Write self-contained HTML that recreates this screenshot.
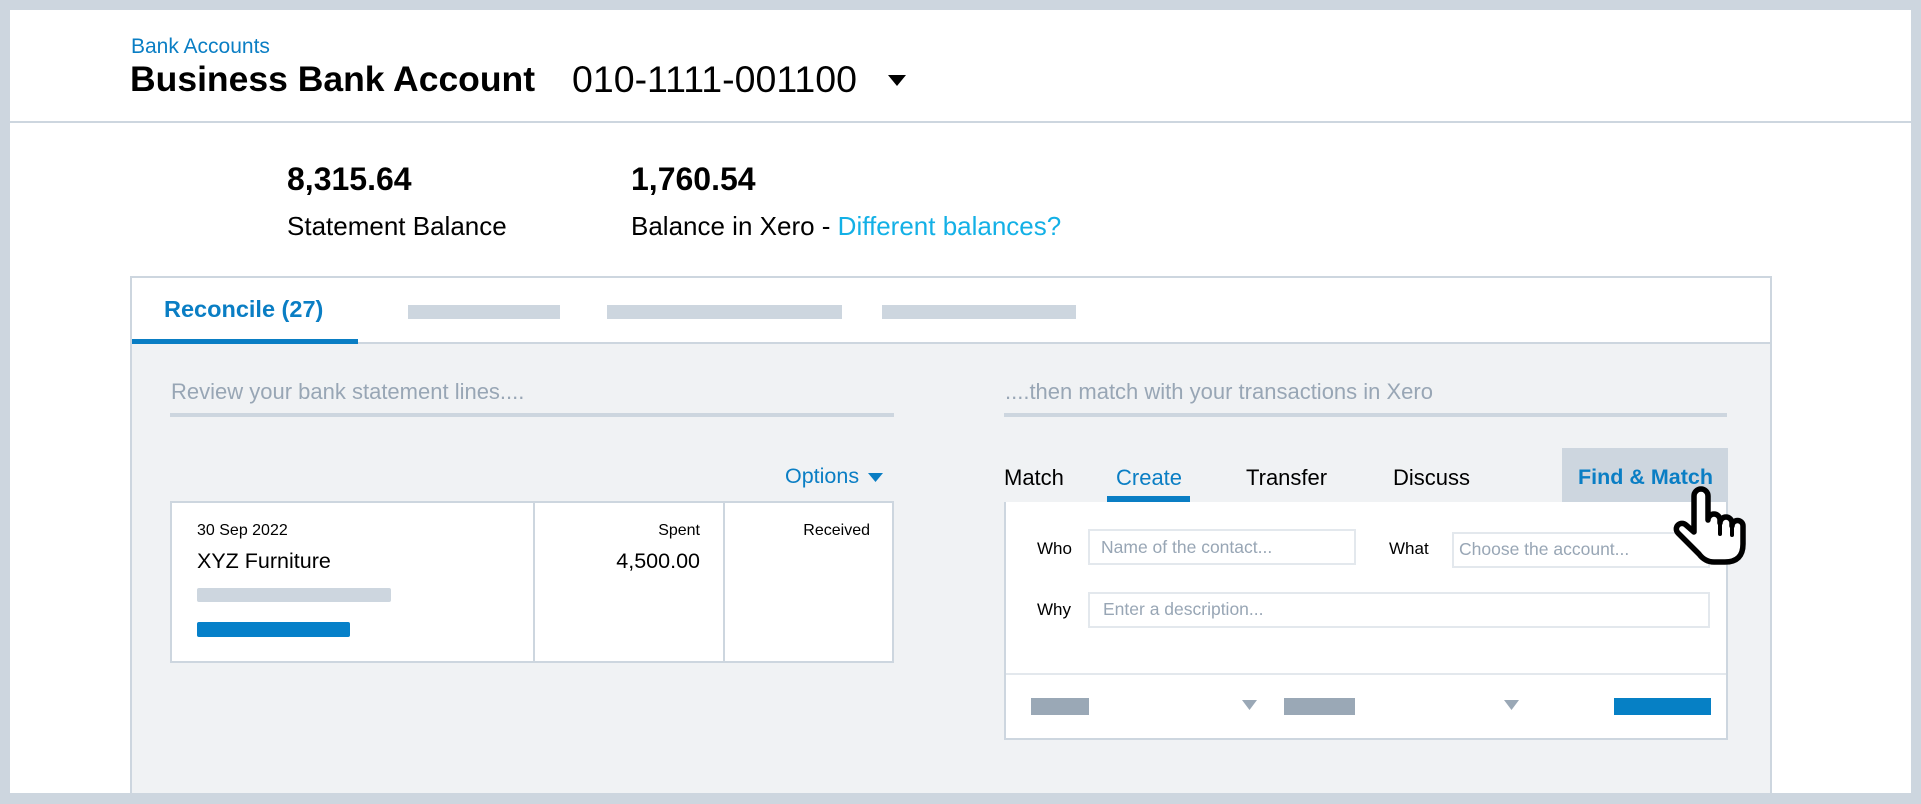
<!DOCTYPE html>
<html><head><meta charset="utf-8"><style>
*{margin:0;padding:0;box-sizing:border-box}
body{width:1921px;height:804px;background:#cdd6df;position:relative;overflow:hidden;font-family:"Liberation Sans",Arial,sans-serif;color:#000}
.a{position:absolute}
.t{position:absolute;white-space:nowrap;line-height:1}
</style></head><body>
<div class="a" style="left:10px;top:10px;width:1901px;height:783px;background:#fff"></div>
<div class="a" style="left:10px;top:121px;width:1901px;height:2px;background:#cdd6df"></div>
<div class="t" style="left:131px;top:36px;font-size:21px;color:#0a7ec4">Bank Accounts</div>
<div class="t" style="left:130px;top:62px;font-size:35.5px;font-weight:bold">Business Bank Account</div>
<div class="t" style="left:572px;top:61px;font-size:37.5px">010-1111-001100</div>
<svg class="a" style="left:888px;top:75px" width="18" height="12"><path d="M0,0H18L9,11Z" fill="#000"/></svg>

<div class="t" style="left:287px;top:163px;font-size:32px;font-weight:bold">8,315.64</div>
<div class="t" style="left:287px;top:213px;font-size:26px">Statement Balance</div>
<div class="t" style="left:631px;top:163px;font-size:32px;font-weight:bold">1,760.54</div>
<div class="t" style="left:631px;top:213px;font-size:26px">Balance in Xero - <span style="color:#13b0e6">Different balances?</span></div>

<div class="a" style="left:130px;top:276px;width:1642px;height:517px;background:#f0f2f4;border:2px solid #cdd6df;border-bottom:none"></div>
<div class="a" style="left:132px;top:278px;width:1638px;height:66px;background:#fff;border-bottom:2px solid #cdd6df"></div>
<div class="t" style="left:164px;top:298px;font-size:23.5px;font-weight:bold;color:#0a7ec4">Reconcile (27)</div>
<div class="a" style="left:132px;top:339px;width:226px;height:5px;background:#0a7ec4"></div>
<div class="a" style="left:408px;top:305px;width:152px;height:14px;background:#cdd6df"></div>
<div class="a" style="left:607px;top:305px;width:235px;height:14px;background:#cdd6df"></div>
<div class="a" style="left:882px;top:305px;width:194px;height:14px;background:#cdd6df"></div>

<div class="t" style="left:171px;top:381px;font-size:22px;color:#98a6b5">Review your bank statement lines....</div>
<div class="a" style="left:170px;top:413px;width:724px;height:4px;background:#cdd6df"></div>
<div class="t" style="left:1005px;top:381px;font-size:22px;color:#98a6b5">....then match with your transactions in Xero</div>
<div class="a" style="left:1004px;top:413px;width:723px;height:4px;background:#cdd6df"></div>

<div class="t" style="left:785px;top:466px;font-size:21.5px;color:#0a7ec4">Options</div>
<svg class="a" style="left:868px;top:473px" width="15" height="9"><path d="M0,0H15L7.5,9Z" fill="#0a7ec4"/></svg>

<div class="a" style="left:170px;top:501px;width:724px;height:162px;background:#fff;border:2px solid #cdd6df"></div>
<div class="a" style="left:533px;top:501px;width:2px;height:162px;background:#cdd6df"></div>
<div class="a" style="left:723px;top:501px;width:2px;height:162px;background:#cdd6df"></div>
<div class="t" style="left:197px;top:523px;font-size:16px">30 Sep 2022</div>
<div class="t" style="left:197px;top:551px;font-size:21.5px">XYZ Furniture</div>
<div class="a" style="left:197px;top:588px;width:194px;height:14px;background:#cdd6df;border-radius:2px"></div>
<div class="a" style="left:197px;top:622px;width:153px;height:15px;background:#0680c9;border-radius:2px"></div>
<div class="t" style="left:600px;width:100px;text-align:right;top:523px;font-size:16px">Spent</div>
<div class="t" style="left:560px;width:140px;text-align:right;top:551px;font-size:21.5px">4,500.00</div>
<div class="t" style="left:760px;width:110px;text-align:right;top:523px;font-size:16px">Received</div>

<div class="a" style="left:1562px;top:448px;width:166px;height:54px;background:#cdd6df"></div>
<div class="t" style="left:1004px;top:467px;font-size:22px">Match</div>
<div class="t" style="left:1116px;top:467px;font-size:22px;color:#0a7ec4">Create</div>
<div class="a" style="left:1107px;top:496px;width:83px;height:6px;background:#0a7ec4"></div>
<div class="t" style="left:1246px;top:467px;font-size:22px">Transfer</div>
<div class="t" style="left:1393px;top:467px;font-size:22px">Discuss</div>
<div class="t" style="left:1578px;top:467px;font-size:21.5px;font-weight:bold;color:#0a7ec4">Find &amp; Match</div>

<div class="a" style="left:1004px;top:502px;width:724px;height:238px;background:#fff;border:2px solid #cdd6df;border-top:none"></div>
<div class="a" style="left:1006px;top:673px;width:720px;height:2px;background:#e3e8ed"></div>
<div class="t" style="left:1037px;top:540px;font-size:17px">Who</div>
<div class="a" style="left:1088px;top:529px;width:268px;height:36px;border:2px solid #e3e8ed"></div>
<div class="t" style="left:1101px;top:539px;font-size:17.5px;color:#98a6b5">Name of the contact...</div>
<div class="t" style="left:1389px;top:540px;font-size:17px">What</div>
<div class="a" style="left:1452px;top:532px;width:258px;height:36px;border:2px solid #e3e8ed"></div>
<div class="t" style="left:1459px;top:541px;font-size:17.5px;color:#98a6b5">Choose the account...</div>
<div class="t" style="left:1037px;top:601px;font-size:17px">Why</div>
<div class="a" style="left:1088px;top:592px;width:622px;height:36px;border:2px solid #e3e8ed"></div>
<div class="t" style="left:1103px;top:601px;font-size:17.5px;color:#98a6b5">Enter a description...</div>

<div class="a" style="left:1031px;top:698px;width:58px;height:17px;background:#9aa8b6"></div>
<svg class="a" style="left:1242px;top:700px" width="15" height="10"><path d="M0,0H15L7.5,10Z" fill="#9aa8b6"/></svg>
<div class="a" style="left:1284px;top:698px;width:71px;height:17px;background:#9aa8b6"></div>
<svg class="a" style="left:1504px;top:700px" width="15" height="10"><path d="M0,0H15L7.5,10Z" fill="#9aa8b6"/></svg>
<div class="a" style="left:1614px;top:698px;width:97px;height:17px;background:#0680c5"></div>

<svg class="a" style="left:1672px;top:484px" width="78" height="84" viewBox="0 0 78 84">
<path d="M22,48 L22,12 a7,7 0 0 1 14,0 L36,36 a6,6 0 0 1 12,0 v3 a6,6 0 0 1 12,0 v3 a5.5,5.5 0 0 1 11,0 V60 q0,18 -18,18 H42 q-9,0 -15,-8 L6,49 a5.5,5.5 0 0 1 8,-8 Z" fill="#fff" stroke="#000" stroke-width="5.5" stroke-linejoin="round"/>
<path d="M48,39 V50 M60,42 V51" stroke="#000" stroke-width="4" stroke-linecap="round"/>
</svg>
</body></html>
